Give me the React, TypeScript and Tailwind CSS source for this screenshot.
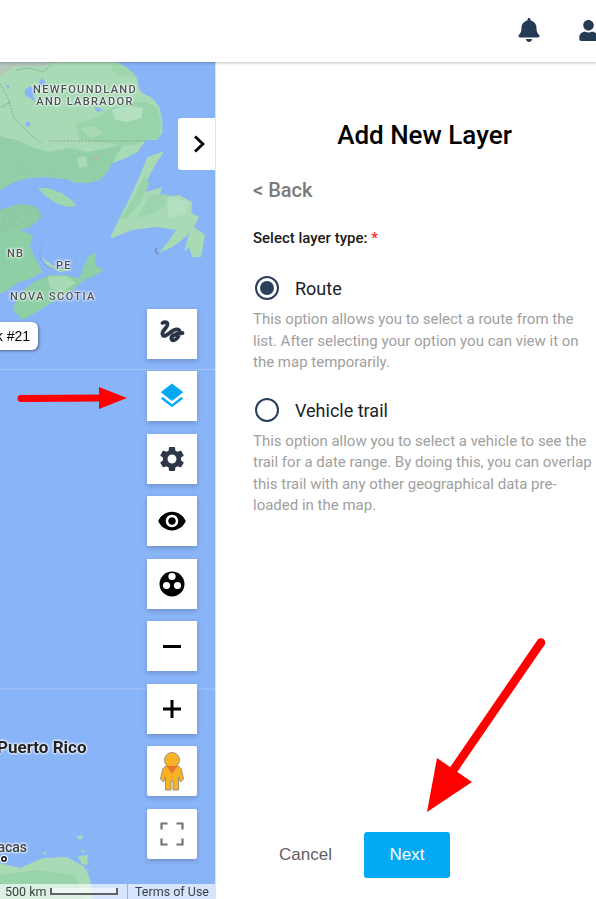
import type { ReactNode } from "react";
import { FaBell, FaUser } from "react-icons/fa";
import { MdLayers, MdSettings, MdVisibility } from "react-icons/md";

const halo = "[text-shadow:0_0_2px_#fff,0_0_3px_#fff,0_0_3px_#fff]";

const MapTool = ({ children, rounded }: { children: ReactNode; rounded?: boolean }) => (
  <button
    type="button"
    className={`flex h-[50px] w-[50px] shrink-0 items-center justify-center bg-white shadow-[0_2px_5px_rgba(0,0,0,0.2)] ${rounded ? "rounded-[2px]" : ""}`}
  >
    {children}
  </button>
);

// map tiles, y is page y minus the 62px header
const MapDrawing = () => (
  <svg className="absolute inset-0 h-full w-full" viewBox="0 0 216 837" preserveAspectRatio="none">
    <defs>
      <filter id="soft" x="-5%" y="-5%" width="110%" height="110%">
        <feGaussianBlur stdDeviation="0.6" />
      </filter>
      <filter id="forest" x="0" y="0" width="100%" height="100%">
        <feTurbulence type="fractalNoise" baseFrequency="0.55" numOctaves="2" seed="4" result="noise" />
        <feColorMatrix in="noise" values="0 0 0 0 0.36  0 0 0 0 0.62  0 0 0 0 0.45  0 0 0 2.4 -1" result="speck" />
        <feComposite in="speck" in2="SourceAlpha" operator="in" result="clipped" />
        <feMerge>
          <feMergeNode in="SourceGraphic" />
          <feMergeNode in="clipped" />
        </feMerge>
      </filter>
    </defs>
    <rect width="216" height="837" fill="#8ab4f8" />
    <g filter="url(#soft)">
      {/* mainland north of the gulf */}
      <path
        d="M0 0H117L128 6L137 15L140 27L143 31L153 36L160 45L163 58L163 71L157 78L147 78L138 90L127 96L113 101L106 112L100 118L88 121L77 121L66 117L43 115L28 116L14 120L0 128Z"
        fill="#a8dab5"
      />
      <path d="M0 0H62L40 5L16 4L0 14Z" fill="#b4c8bc" />
      <path d="M118 0L128 6L137 15L122 14L110 8Z" fill="#a0d6ae" />
      <path d="M76 62L96 56L112 46L132 40L146 40L158 46L162 60L160 76L147 78L132 84L96 80L80 78Z" fill="#98d3aa" />
      <path d="M112 48L126 44L144 46L142 56L128 60L116 58Z" fill="#b2e0c0" />
      <path d="M80 66L96 64L104 72L90 76Z" fill="#a8dab5" />
      <path d="M0 74L16 78L34 86L50 90L70 86L88 90L110 86L124 82L113 101L106 112L100 118L88 121L77 121L66 117L43 115L28 116L14 120L0 128Z" fill="#8fcfa5" filter="url(#forest)" />
      <path d="M77 96L86 94L88 104L80 106Z" fill="#a8dab5" />
      <path d="M92 96L98 94L98 100Z" fill="#b0b9b0" />
      {/* lakes */}
      <path d="M25 28L30 24L35 27L33 34L36 40L30 36L25 33Z" fill="#8ab4f8" />
      <path d="M39 20L42 16L46 20L43 26Z" fill="#8ab4f8" />
      <path d="M26 60L30 60L30 65L26 64Z" fill="#8ab4f8" />
      <path d="M6 22L10 24L8 28Z" fill="#8ab4f8" />
      <path d="M94 44L104 48L98 50Z" fill="#8ab4f8" />
      {/* Anticosti */}
      <path d="M38 126L48 126L62 131L73 139L77 144L68 145L56 141L46 134Z" fill="#a0d6ae" />
      {/* Newfoundland */}
      <path
        d="M111 175L120 156L128 141L140 115L148 95L165 89L157 101L148 118L147 130L163 125L160 135L180 133L193 140L192 151L200 155L195 165L206 173L202 195L193 195L190 185L185 190L190 171L183 178L173 185L160 191L170 178L177 168L157 165L133 168L113 176Z"
        fill="#a8dab5"
      />
      <path d="M122 156L134 136L145 114L150 122L140 142L128 156Z" fill="#98d3aa" />
      <path d="M150 134L168 132L164 146L152 152L138 156Z" fill="#9cd5ad" />
      <path d="M170 134L190 140L186 152L170 156L168 146Z" fill="#b2e0c0" />
      {/* New Brunswick, PEI, Cape Breton, Nova Scotia */}
      <path
        d="M0 148L20 142L37 145L42 155L30 165L20 168L33 173L30 185L38 201L43 210L32 216L17 221L3 231H0Z"
        fill="#8fcfa5"
      />
      <path d="M0 148L20 142L37 145L42 155L30 165L14 168L0 172Z" fill="#88c99f" filter="url(#forest)" />
      <path d="M38 188L42 195L55 205L72 208L60 210L47 203Z" fill="#a8dab5" />
      <path d="M80 215L88 195L97 190L95 203L104 208L93 215L83 218Z" fill="#8fcfa5" />
      <path d="M32 221L50 213L67 213L85 218L73 228L57 238L40 248L23 258L13 248L17 235Z" fill="#8fcfa5" />
      <path d="M48 215L66 214L76 221L62 230L50 226Z" fill="#a8dab5" />
      {/* Lesser Antilles */}
      <path d="M76 775L84 773L81 778ZM82 786L85 790L83 791ZM85 797L90 801L86 802ZM87 807L90 809L88 810Z" fill="#a8dab5" />
      {/* Venezuelan coast */}
      <path
        d="M0 801L20 806L43 796L67 795L76 800L84 804L90 815L93 837H0Z"
        fill="#a8dab5"
      />
      <path d="M0 813L38 808L74 813L86 832L84 837H0Z" fill="#98d3aa" />
      <path d="M42 791L47 790L46 793Z" fill="#a8dab5" />
      <path d="M78 794L88 793L88 803L82 802Z" fill="#a8dab5" />
    </g>
    <path d="M50 79H146" fill="none" stroke="#8b9c92" strokeWidth="0.8" strokeDasharray="2 1.5" />
    <path d="M0 22L8 36L14 56L28 70L42 82M10 40L0 46" fill="none" stroke="#6f7f76" strokeWidth="0.7" strokeDasharray="1.5 1.5" />
    <path d="M16 8L30 6L44 10L50 4" fill="none" stroke="#6f7f76" strokeWidth="0.7" strokeDasharray="1.5 1.5" />
    <path d="M44 180C36 190 40 204 52 206C64 208 76 204 78 196" fill="none" stroke="#7f8d99" strokeWidth="0.6" strokeDasharray="2 1.5" />
    <path d="M157 186C156 190 157 192 159 192" fill="none" stroke="#555" strokeWidth="0.7" />
    {/* tile seams */}
    <path d="M0 307.5H216M0 627H216" stroke="#a6c6fa" strokeWidth="1" />
    <circle cx="4" cy="797" r="4" fill="#fff" />
    <circle cx="4" cy="797" r="3" fill="#202124" />
    <circle cx="4" cy="797" r="1.2" fill="#fff" />
  </svg>
);

const RadioRow = ({ label, checked }: { label: string; checked?: boolean }) => (
  <label className="flex h-6 items-center">
    <span className="ml-[2px] flex h-6 w-6 items-center justify-center rounded-full border-2 border-[#2a3f5a]">
      {checked && <span className="h-[14px] w-[14px] rounded-full bg-[#2a3f5a]" />}
    </span>
    <span className="ml-4 pt-[2px] text-[18px] leading-6 text-[#202124]">{label}</span>
  </label>
);

export default function App() {
  return (
    <div className="relative flex h-[899px] w-[596px] flex-col overflow-hidden bg-white font-['Roboto',sans-serif]">
      <header className="relative z-20 flex h-[62px] shrink-0 items-center shadow-[0_1px_3px_rgba(0,0,0,0.25)]">
        <FaBell className="ml-[517px] mt-[-2px] h-[24px] w-[24px] shrink-0 text-[#243b55]" />
        <FaUser className="ml-[37px] mt-[-2px] h-[21px] w-[21px] shrink-0 text-[#243b55]" />
      </header>

      <div className="flex min-h-0 flex-1">
        <section className="relative w-[216px] shrink-0 overflow-hidden border-r border-[#d8e4f8]">
          <MapDrawing />

          <div className={`absolute left-[33px] top-[22px] text-center text-[11px] font-medium leading-[12px] tracking-[1.35px] text-[#4d5156] ${halo}`}>
            NEWFOUNDLAND
            <br />
            AND LABRADOR
          </div>
          <div className={`absolute left-[7px] top-[186px] text-[11px] font-medium leading-3 tracking-[1.2px] text-[#4d5156] ${halo}`}>NB</div>
          <div className={`absolute left-[56px] top-[198px] text-[11px] font-medium leading-3 tracking-[1.2px] text-[#4d5156] ${halo}`}>PE</div>
          <div className={`absolute left-[10px] top-[229px] text-[11px] font-medium leading-3 tracking-[1.4px] text-[#4d5156] ${halo}`}>NOVA SCOTIA</div>
          <div className={`absolute left-[-3px] top-[675px] text-[17px] font-bold leading-5 text-[#202124] ${halo}`}>Puerto Rico</div>
          <div className={`absolute left-[-24px] top-[777px] text-[14px] font-medium leading-[16px] text-[#3c4043] ${halo}`}>Caracas</div>

          <div className="absolute left-[-20px] top-[260px] flex h-[28px] w-[58px] items-center justify-end rounded-md bg-white pr-[8px] font-['Liberation_Sans',sans-serif] text-[14px] text-black shadow-[1px_1px_3px_rgba(0,0,0,0.45)]">
            k #21
          </div>

          <button type="button" className="absolute left-[178px] top-[56px] flex h-[52px] w-[38px] items-center justify-center rounded-l-[3px] bg-white pl-[3px]">
            <svg viewBox="0 0 12 18" className="h-[18px] w-[12px]" fill="none" stroke="#000" strokeWidth="2.8">
              <path d="M2 1.5L10 9L2 16.5" />
            </svg>
          </button>

          <div className="absolute left-[147px] top-[246.75px] flex flex-col gap-[12.5px]">
            <MapTool>
              <svg viewBox="0 0 50 50" className="h-[50px] w-[50px]" fill="none" stroke="#2a3547" strokeWidth="3.8" strokeLinecap="round" strokeLinejoin="round">
                <path d="M15.5 14C18.5 12 21.5 13.5 20 17C18.5 20 14.5 22.5 15.5 25.5C16.5 28.5 20 26 22.5 24C25.5 21.5 28.5 19.5 31 20.5C33.5 21.5 32.5 25 31 28C29.5 31 25.5 32.5 24.5 30C23.5 27.5 27.5 24.5 35.5 24" />
              </svg>
            </MapTool>
            <MapTool>
              <MdLayers className="h-[30px] w-[30px] text-[#03a9f4]" />
            </MapTool>
            <MapTool>
              <MdSettings className="h-[30px] w-[30px] text-[#2d3748]" />
            </MapTool>
            <MapTool>
              <MdVisibility className="h-[30px] w-[30px] text-black" />
            </MapTool>
            <MapTool>
              <svg viewBox="0 0 50 50" className="h-[50px] w-[50px]">
                <circle cx="25" cy="25" r="12.5" fill="#000" />
                <circle cx="25" cy="17.5" r="3.6" fill="#fff" />
                <circle cx="19.5" cy="26.5" r="3.6" fill="#fff" />
                <circle cx="30.5" cy="26.5" r="3.6" fill="#fff" />
              </svg>
            </MapTool>
            <MapTool>
              <span className="h-[3px] w-[18px] bg-black" />
            </MapTool>
            <MapTool>
              <svg viewBox="0 0 18 18" className="h-[18px] w-[18px]" fill="#000">
                <path d="M7.5 0H10.5V7.5H18V10.5H10.5V18H7.5V10.5H0V7.5H7.5Z" />
              </svg>
            </MapTool>
            <MapTool rounded>
              <svg viewBox="0 0 50 50" className="h-[50px] w-[50px]">
                <path
                  d="M19 20H31C33 21 34 22 34.5 24L36.5 33L33.5 36L31.5 31V44H26V35H24V44H18.5V31L16.5 36L13.5 33L15.5 24C16 22 17 21 19 20Z"
                  fill="#fbb124"
                  stroke="#8a8a80"
                  strokeWidth="0.9"
                />
                <circle cx="25" cy="14" r="7.5" fill="#fbb124" stroke="#8a8a80" strokeWidth="0.9" />
                <path d="M19.5 20H30.5L25 28Z" fill="#e8762d" />
              </svg>
            </MapTool>
            <MapTool rounded>
              <svg viewBox="0 0 24 24" className="h-[24px] w-[24px]" fill="none" stroke="#757575" strokeWidth="2.2">
                <path d="M1.5 7.5V1.5H7.5M16.5 1.5H22.5V7.5M22.5 16.5V22.5H16.5M7.5 22.5H1.5V16.5" />
              </svg>
            </MapTool>
          </div>

          <div className="absolute inset-x-0 bottom-0 flex h-[15px] items-center text-[12.5px] leading-4 text-[#3c4043]">
            <div className="flex h-full w-[127px] items-center gap-[4px] bg-white/65 pl-[5px]">
              <span>500 km</span>
              <span className="h-[7px] w-[68px] border-x-[2px] border-b-[2px] border-[#5f6368] bg-white/50" />
            </div>
            <div className="ml-px flex h-full flex-1 items-center bg-white/65 pl-[7px]">Terms of Use</div>
          </div>
        </section>

        <section className="flex min-w-0 flex-1 flex-col pl-[37px]">
          <h1 className="mt-[57px] text-center text-[26px] font-medium leading-8 text-black">Add New Layer</h1>
          <a className="mt-[25px] text-[20px] font-medium leading-7 text-[#7b7b7b]">&lt; Back</a>
          <p className="mt-[24px] text-[15px] font-medium leading-5 text-[#1c1c1c]">
            Select layer type: <span className="text-[#ff1f1f]">*</span>
          </p>

          <div className="mt-[28px]">
            <RadioRow label="Route" checked />
            <p className="mt-[9px] w-[336px] text-[15px] leading-[21.5px] text-[#a0a0a0]">
              This option allows you to select a route from the list. After selecting your option you can view it on the map temporarily.
            </p>
          </div>

          <div className="mt-[24px]">
            <RadioRow label="Vehicle trail" />
            <p className="mt-[9px] w-[343px] text-[15px] leading-[21.5px] text-[#a0a0a0]">
              This option allow you to select a vehicle to see the trail for a date range. By doing this, you can overlap this trail with any other geographical data pre-loaded in the map.
            </p>
          </div>

          <div className="mt-auto mb-[21px] ml-[26px] flex items-center gap-[32px] font-['Liberation_Sans',sans-serif] text-[17px]">
            <button type="button" className="text-[#5f5f5f]">Cancel</button>
            <button type="button" className="h-[46px] w-[86px] rounded-[3px] bg-[#03a9f4] text-white">Next</button>
          </div>
        </section>
      </div>

      {/* annotation arrows drawn over the screenshot */}
      <svg className="pointer-events-none absolute inset-0 z-30 h-full w-full" viewBox="0 0 596 899">
        <path d="M21 398.5L104 398" stroke="#f00" strokeWidth="7" strokeLinecap="round" />
        <path d="M99 387L127 398L99 409Z" fill="#f00" />
        <path d="M541 642.5L452 772" stroke="#f00" strokeWidth="8.5" strokeLinecap="round" />
        <path d="M437 758L472 782L427 812Z" fill="#f00" />
      </svg>
    </div>
  );
}
